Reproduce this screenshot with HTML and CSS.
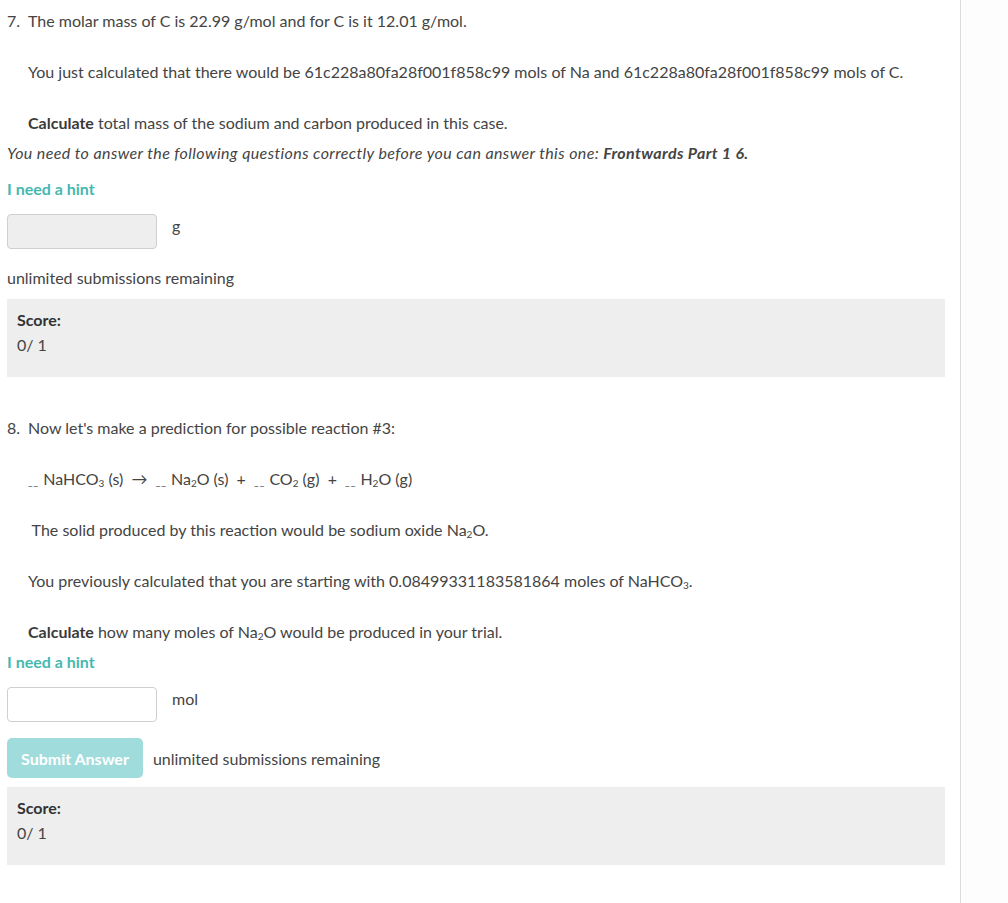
FILE: index.html
```html
<!DOCTYPE html>
<html lang="en">
<head>
  <meta charset="UTF-8">
  <title>Problem set</title>
  <link rel="stylesheet" href="styles.css">
</head>
<body>
<div class="page">
  <div class="main">

    <div class="question">
      <div class="prompt">
        <span class="num">7.</span>
        <div class="body">
          <p>The molar mass of C is 22.99 g/mol and for C is it 12.01 g/mol.</p>
          <p>You just calculated that there would be 61c228a80fa28f001f858c99 mols of Na and 61c228a80fa28f001f858c99 mols of C.</p>
          <p><strong>Calculate</strong> total mass of the sodium and carbon produced in this case.</p>
        </div>
      </div>
      <p class="prereq">You need to answer the following questions correctly before you can answer this one: <strong>Frontwards Part 1 6.</strong></p>
      <a class="hint" href="#">I need a hint</a>
      <div class="answer">
        <input type="text" disabled>
        <span class="unit">g</span>
      </div>
      <div class="submit-row">
        <span>unlimited submissions remaining</span>
      </div>
      <div class="score">
        <strong>Score:</strong>
        <div class="points">0/ 1</div>
      </div>
    </div>

    <div class="question">
      <div class="prompt">
        <span class="num">8.</span>
        <div class="body">
          <p>Now let's make a prediction for possible reaction #3:</p>
          <p class="equation"><span class="blank">__</span> NaHCO<sub>3</sub> (s) &nbsp;&rarr; &nbsp;<span class="blank">__</span> Na<sub>2</sub>O (s) &nbsp;+ &nbsp;<span class="blank">__</span> CO<sub>2</sub> (g) &nbsp;+ &nbsp;<span class="blank">__</span> H<sub>2</sub>O (g)</p>
          <p>&nbsp;The solid produced by this reaction would be sodium oxide Na<sub>2</sub>O.</p>
          <p>You previously calculated that you are starting with 0.08499331183581864 moles of NaHCO<sub>3</sub>.</p>
          <p><strong>Calculate</strong> how many moles of Na<sub>2</sub>O would be produced in your trial.</p>
        </div>
      </div>
      <a class="hint" href="#">I need a hint</a>
      <div class="answer">
        <input type="text">
        <span class="unit">mol</span>
      </div>
      <div class="submit-row">
        <button class="submit" disabled>Submit Answer</button>
        <span>unlimited submissions remaining</span>
      </div>
      <div class="score">
        <strong>Score:</strong>
        <div class="points">0/ 1</div>
      </div>
    </div>

  </div>
  <div class="sidebar"></div>
</div>
</body>
</html>
```

FILE: styles.css
```css
html, body {
  margin: 0;
  padding: 0;
  height: 100%;
}

body {
  font: 16px/21px "Lato", "Open Sans", sans-serif;
  color: #444;
  background: #fff;
}

.page {
  display: flex;
  min-height: 100%;
}

.main {
  width: 938px;
  padding: 10px 15px 0 7px;
  border-right: 1px solid #dcdcdc;
}

.sidebar {
  flex: 1;
  background: #fdfdfd;
}

.question {
  margin-bottom: 40px;
}

.prompt {
  display: flex;
}

.num {
  width: 21px;
}

.body {
  flex: 1;
}

.body p {
  margin: 0 0 30px 0;
}

.body p:last-child {
  margin-bottom: 9px;
}

.body strong {
  font-weight: bold;
  color: #3a3a3a;
}

sub {
  font-size: 10px;
  line-height: 0;
  vertical-align: baseline;
  position: relative;
  top: 2px;
}

.blank {
  font-size: 10px;
  line-height: 0;
  letter-spacing: 1px;
}

.prereq {
  margin: 0 0 15px 0;
  font-style: italic;
  letter-spacing: 0.4px;
}

.hint {
  display: block;
  color: #45b8b0;
  font-weight: bold;
  text-decoration: none;
}

.answer {
  display: flex;
  align-items: flex-start;
  margin-top: 15px;
}

.answer input {
  box-sizing: border-box;
  width: 150px;
  height: 35px;
  border: 1px solid #cfcfcf;
  border-radius: 4px;
  background: #fff;
  font: inherit;
  padding: 6px 10px;
}

.answer input:disabled {
  background: #eee;
}

.unit {
  margin: 1px 0 0 15px;
}

.submit-row {
  display: flex;
  align-items: center;
  gap: 10px;
  min-height: 25px;
  margin-top: 16px;
}

.submit {
  height: 40px;
  padding: 0 14px;
  border: none;
  border-radius: 5px;
  background: #a1dcdd;
  color: #fff;
  font: bold 16px "Lato", sans-serif;
}

.score {
  margin-top: 9px;
  padding: 10px 10px 22px 10px;
  background: #eee;
}

.score strong {
  display: block;
  color: #333;
}

.points {
  margin-top: 4px;
}
```
